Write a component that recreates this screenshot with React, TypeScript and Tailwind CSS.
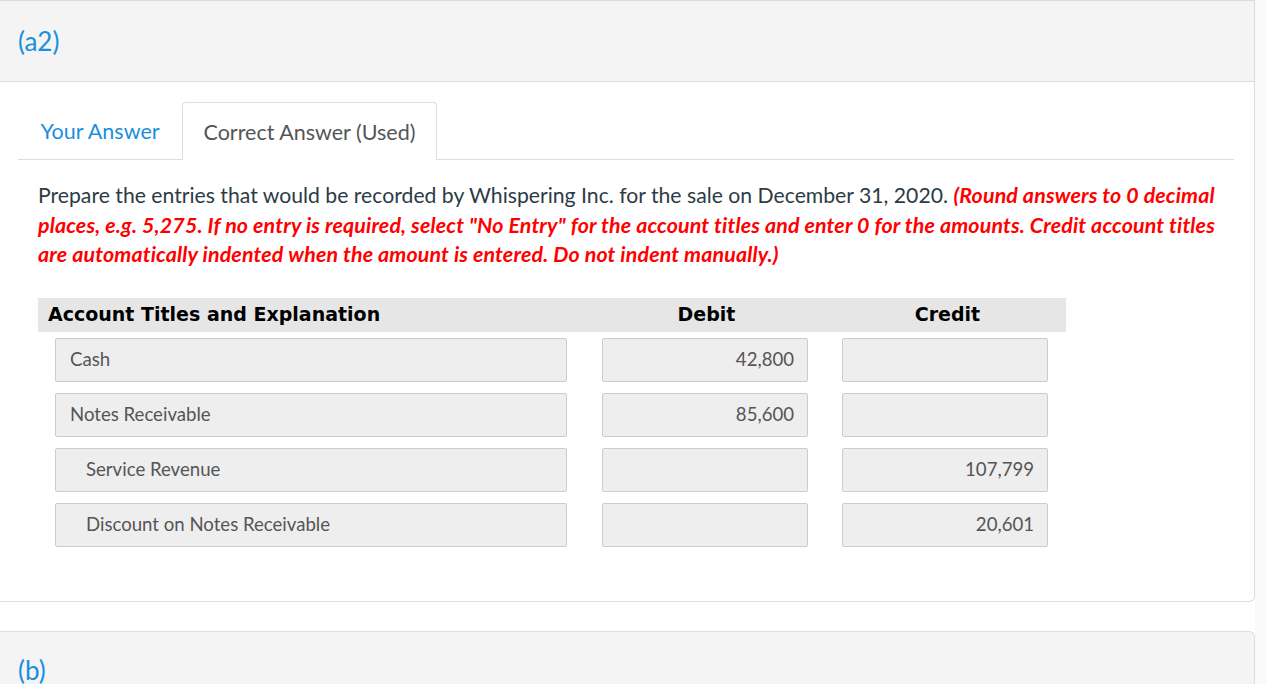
import React from 'react';

interface EntryRow {
  account: string;
  debit: string;
  credit: string;
  indent?: boolean;
}

const rows: EntryRow[] = [
  { account: 'Cash', debit: '42,800', credit: '' },
  { account: 'Notes Receivable', debit: '85,600', credit: '' },
  { account: 'Service Revenue', debit: '', credit: '107,799', indent: true },
  { account: 'Discount on Notes Receivable', debit: '', credit: '20,601', indent: true },
];

const font = { fontFamily: 'Lato, "Open Sans", sans-serif' };

function Field({ value, className, align = 'left' }: { value: string; className: string; align?: 'left' | 'right' }) {
  return (
    <div
      className={`h-[44px] rounded-[2px] border border-[#cccccc] bg-[#eeeeee] flex items-center text-[18.6px] text-[#555555] ${
        align === 'right' ? 'justify-end pr-[13px]' : ''
      } ${className}`}
    >
      {value}
    </div>
  );
}

export default function App() {
  return (
    <div className="flex w-[1266px] h-[684px] overflow-hidden bg-white" style={font}>
      <div className="w-[1255px] shrink-0">
        {/* Part a2 */}
        <div className="border border-l-0 border-[#dddddd] rounded-br-[6px] bg-white">
          <div className="h-[81px] bg-[#f4f4f4] border-b border-[#dddddd] pl-[18px] pt-[24px]">
            <span className="text-[26px] text-[#1a8fdd] leading-[32px]">(a2)</span>
          </div>

          <div className="px-[18px] pt-[20px]">
            {/* Tabs */}
            <div className="flex w-[1216px] border-b border-[#dddddd] h-[58px]">
              <div className="w-[164px] flex items-center justify-center text-[21.5px] text-[#1a8fdd] pt-[1px]">Your Answer</div>
              <div className="w-[255px] flex items-center justify-center text-[21.5px] text-[#555555] border border-b-0 border-[#dddddd] rounded-t-[4px] bg-white h-[58px] pt-[1px]">
                Correct Answer (Used)
              </div>
            </div>

            {/* Instructions */}
            <p className="pl-[20px] pr-[20px] mt-[21px] text-[21.2px] leading-[29.5px] text-[#2d3b45]">
              Prepare the entries that would be recorded by Whispering Inc. for the sale on December 31, 2020.{' '}
              <span className="font-bold italic text-[#ff0000] text-[21.4px] tracking-[0.15px]">
                (Round answers to 0 decimal places, e.g. 5,275. If no entry is required, select "No Entry" for the account titles and enter 0 for the amounts. Credit account titles are automatically indented when the amount is entered. Do not indent manually.)
              </span>
            </p>

            {/* Journal table */}
            <div className="ml-[20px] mt-[28px] w-[1028px] pb-[54px]">
              <div
                className="h-[34px] bg-[#e6e6e6] flex items-center text-[19px] font-bold text-black"
                style={{ fontFamily: '"DejaVu Sans", Verdana, sans-serif' }}
              >
                <div className="w-[546px] pl-[10px]">Account Titles and Explanation</div>
                <div className="w-[241px] text-center pl-[4px]">Debit</div>
                <div className="w-[241px] text-center pl-[4px]">Credit</div>
              </div>
              <div className="flex flex-col gap-[11px] mt-[6px]">
                {rows.map((r) => (
                  <div key={r.account} className="flex items-center">
                    <Field
                      value={r.account}
                      className={`ml-[17px] w-[512px] ${r.indent ? 'pl-[30px]' : 'pl-[14px]'}`}
                    />
                    <Field value={r.debit} align="right" className="ml-[35px] w-[206px]" />
                    <Field value={r.credit} align="right" className="ml-[34px] w-[206px]" />
                  </div>
                ))}
              </div>
            </div>
          </div>
        </div>

        {/* Part b */}
        <div className="mt-[29px] h-[60px] bg-[#f4f4f4] border-t border-r border-[#dddddd] rounded-tr-[6px] pl-[18px] pt-[22px]">
          <span className="text-[26px] text-[#1a8fdd] leading-[32px]">(b)</span>
        </div>
      </div>
      <div className="flex-1 bg-[#f9f9f9]" />
    </div>
  );
}
